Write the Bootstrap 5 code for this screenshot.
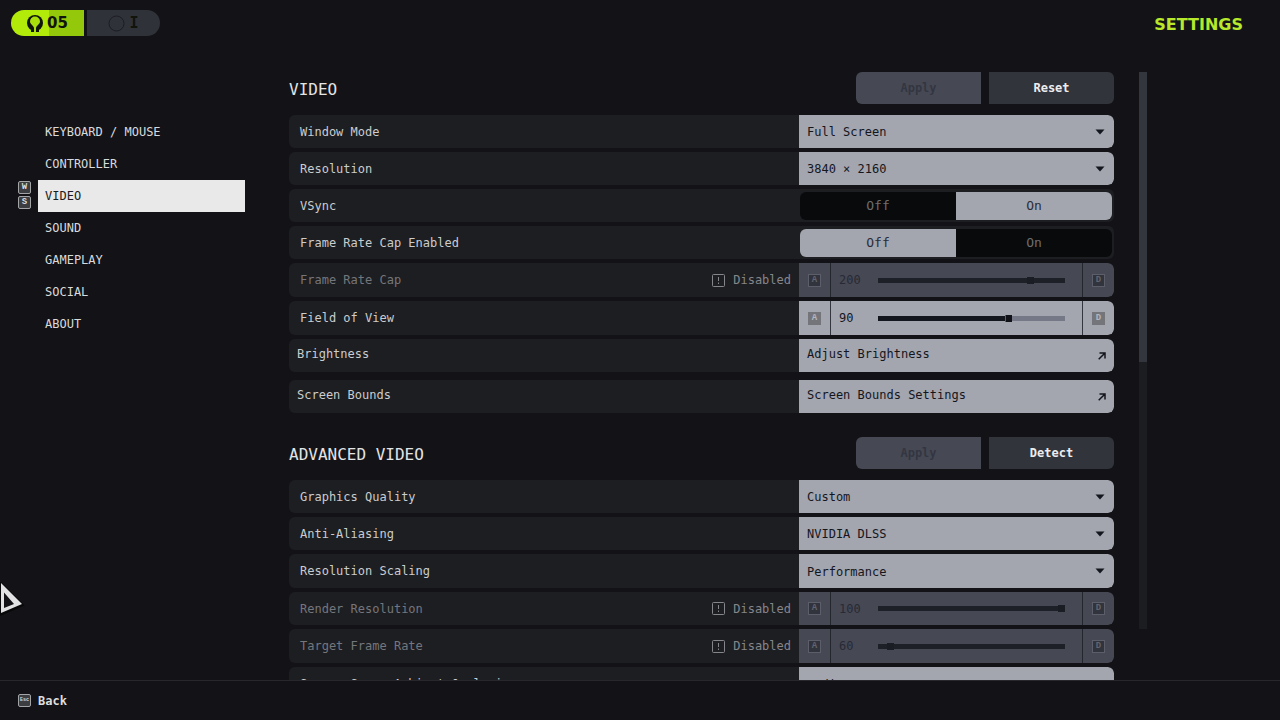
<!DOCTYPE html>
<html lang="en">
<head>
<meta charset="utf-8">
<meta name="viewport" content="width=device-width, initial-scale=1">
<title>Settings</title>
<link href="https://cdn.jsdelivr.net/npm/bootstrap@5.3.0/dist/css/bootstrap.min.css" rel="stylesheet">
<style>
  :root {
    --page: #131317; --panel: #1d1e22; --light: #a3a5af; --ink: #14161d;
    --off-bg: #464854; --off-ink: #282a34; --lime: #b0e90b;
  }
  body { background: var(--page); color: #d9dadc; font-family: "DejaVu Sans Mono", monospace; font-size: 12px; line-height: 16px; }
  button, select, input { font-family: inherit; }
  .wide { font-family: "DejaVu Sans", sans-serif; font-weight: 700; font-size: 16px; line-height: 20px; }

  /* header */
  .topbar { height: 50px; padding: 0 37px 0 11px; }
  .pill { width: 73px; height: 26px; color: #10140a; font-size: 15px; }
  .pill-lime { background: linear-gradient(90deg, #b2eb0a 52%, #94c80b 52%); border-radius: 13px 0 0 13px; }
  .pill-dim { background: #30323a; border-radius: 0 13px 13px 0; }
  .slab { font-family: "DejaVu Sans Mono", monospace; font-weight: 700; }
  .page-name { color: #b7e82b; }

  /* side menu */
  .side { width: 289px; padding: 66px 44px 0 38px; }
  .side .nav-link { padding: 8px 7px; color: #d9dadc; }
  .side .nav-link:hover { color: #fff; }
  .side .nav-link.active { background: #e9e9e9; color: #1b1c20; }
  .move-keys { left: -20px; top: 1px; }
  .keycap { width: 13px; height: 13px; border: 1px solid #a3a4a6; border-radius: 2px; background: #3c3d40; color: #d9dadc; font-size: 9px; line-height: 11px; font-weight: 700; text-align: center; display: block; padding: 0; }
  .keycap-esc { font-size: 5px; }

  /* settings list */
  .settings { padding-top: 22px; }
  .section-name { font-size: 16px; line-height: 20px; font-weight: 400; color: #e4e4e6; }
  .section-head { height: 32px; margin-bottom: 11px; }
  .btn-flat { width: 125px; height: 32px; padding: 0; border: 0; font-size: 12px; font-weight: 700; color: #ececee; background: #32343c; border-radius: 0 6px 6px 0; }
  .btn-flat:hover { background: #3d404a; color: #fff; }
  .btn-flat:disabled { background: #464954; color: #333641; border-radius: 6px 0 0 6px; opacity: 1; font-weight: 700; }
  .rows { gap: 4px; }
  .opt { height: 33px; background: var(--panel); border-radius: 6px; overflow: hidden; }
  .opt-slide { height: 34px; }
  .opt-label { padding: 0 8px 0 11px; color: #cbccce; }
  .opt-go .opt-label { padding: 0 8px 3px 8px; }
  .opt-off .opt-label { color: #75767b; }
  .flagged { color: #85868b; }
  .ctl { width: 315px; }
  .form-select.pick {
    --bs-form-select-bg-img: url("data:image/svg+xml,%3Csvg xmlns='http://www.w3.org/2000/svg' viewBox='0 0 10 6'%3E%3Cpath fill='%2314161d' d='M.5.5h9L5 5.500z'/%3E%3C/svg%3E");
    height: 100%; padding: 1px 30px 0 8px; border: 0; border-radius: 0 6px 6px 0; background-color: var(--light);
    color: var(--ink); font-size: 12px; line-height: 16px; background-size: 10px 6px; background-position: right 9px center;
  }
  .go { height: 100%; padding: 0 8px 3px 8px; border: 0; border-radius: 0 6px 6px 0; background: var(--light); color: var(--ink); font-size: 12px; }
  .go svg { margin-top: 3px; }
  .flip { padding: 3px 2px 2px 1px; }
  .flip label { width: 50%; font-size: 13px; line-height: 18px; color: #6d6e72; background: #090a0c; padding: 5px 0; border: 0; text-align: center; cursor: pointer; }
  .flip .btn-check:checked + label { background: var(--light); color: #2b2d35; }
  .flip label:first-of-type { border-radius: 6px 0 0 6px; }
  .flip label:last-of-type { border-radius: 0 6px 6px 0; }
  .slide { background: var(--light); color: var(--ink); border-radius: 0 6px 6px 0; overflow: hidden; --line: #34363f; --bar: #14161d; --rest: #757887; }
  .step { width: 32px; border: 0; background: none; padding: 0; display: flex; align-items: center; justify-content: center; }
  .step-less { border-right: 1px solid var(--line); }
  .step-more { border-left: 1px solid var(--line); }
  .step .keycap { background: #74757b; border-color: #74757b; border-radius: 0; color: #b4b6be; }
  .slide output { width: 39px; padding-left: 8px; box-sizing: content-box; }
  .slide input { -webkit-appearance: none; appearance: none; height: 7px; min-width: 0; margin-right: 17px; background: linear-gradient(90deg, var(--bar) var(--fill), var(--rest) var(--fill)) center / 100% 5px no-repeat; }
  .slide input::-webkit-slider-thumb { -webkit-appearance: none; width: 7px; height: 7px; background: #101218; border-left: 1px solid #5b5e69; }
  .opt-off .slide { background: var(--off-bg); color: var(--off-ink); --line: #24262e; --bar: #1e2028; --rest: #1e2028; }
  .opt-off .slide input::-webkit-slider-thumb { background: #1b1d24; border: 0; }
  .opt-off .step .keycap { background: #31333d; border-color: #5c5e69; color: #62646f; }

  /* scroll rail and footer */
  .rail { width: 8px; margin: 22px 133px 51px 25px; background: #1c1d21; }
  .rail-thumb { height: 52%; background: #34363d; }
  .foot { height: 40px; border-top: 1px solid #27282c; padding: 0 18px; background: var(--page); }
  .foot button { color: #dcdddf; font-size: 12px; font-weight: 700; gap: 7px; }
  .pointer { left: 0; top: 582px; }
</style>
</head>
<body class="vh-100 d-flex flex-column overflow-hidden position-relative">

<header class="topbar d-flex justify-content-between align-items-center flex-shrink-0">
  <div class="d-flex wide pb-1" style="gap:3px">
    <div class="pill pill-lime d-flex align-items-center justify-content-center gap-1">
      <svg width="16" height="17" viewBox="0 0 16 17" aria-hidden="true"><circle cx="8" cy="8" r="8" fill="#10140a"/><path fill="#10140a" d="M4 13h8v4H4z"/><path fill="#a9e00b" d="M8 1.500A5 5 0 0 1 13 6.500C13 9.500 9.500 10 9 13V17H7V13C6.500 10 3 9.500 3 6.500A5 5 0 0 1 8 1.500z"/></svg>
      <span>05</span>
    </div>
    <div class="pill pill-dim d-flex align-items-center justify-content-center">
      <svg width="17" height="17" viewBox="0 0 17 17" fill="none" stroke="#1c1d23" aria-hidden="true"><circle cx="8.500" cy="8.500" r="7.500"/></svg>
      <span class="slab ms-1">I</span>
    </div>
  </div>
  <h1 class="page-name wide m-0">SETTINGS</h1>
</header>

<main class="d-flex flex-grow-1 overflow-hidden">
  <nav class="side flex-shrink-0 nav flex-column flex-nowrap" aria-label="Settings sections">
    <a class="nav-link" href="#keyboard">KEYBOARD / MOUSE</a>
    <a class="nav-link" href="#controller">CONTROLLER</a>
    <div class="position-relative">
      <div class="move-keys position-absolute d-flex flex-column" style="gap:2px"><kbd class="keycap">W</kbd><kbd class="keycap">S</kbd></div>
      <a class="nav-link active" href="#video" aria-current="page">VIDEO</a>
    </div>
    <a class="nav-link" href="#sound">SOUND</a>
    <a class="nav-link" href="#gameplay">GAMEPLAY</a>
    <a class="nav-link" href="#social">SOCIAL</a>
    <a class="nav-link" href="#about">ABOUT</a>
  </nav>

  <div class="settings flex-grow-1">
    <section id="video" class="mb-4">
      <div class="section-head d-flex justify-content-between align-items-center">
        <h2 class="section-name m-0 pt-1">VIDEO</h2>
        <div class="d-flex gap-2"><button class="btn btn-flat" disabled>Apply</button><button class="btn btn-flat">Reset</button></div>
      </div>
      <div class="rows d-flex flex-column">
        <div class="opt d-flex align-items-center">
          <label class="opt-label flex-grow-1" for="mode">Window Mode</label>
          <div class="ctl h-100"><select id="mode" class="form-select pick"><option>Full Screen</option><option>Windowed</option></select></div>
        </div>
        <div class="opt d-flex align-items-center">
          <label class="opt-label flex-grow-1" for="res">Resolution</label>
          <div class="ctl h-100"><select id="res" class="form-select pick"><option>3840 × 2160</option><option>1920 × 1080</option></select></div>
        </div>
        <div class="opt d-flex align-items-center">
          <span class="opt-label flex-grow-1" id="vs">VSync</span>
          <div class="ctl flip d-flex" role="group" aria-labelledby="vs">
            <input class="btn-check" type="radio" name="vsync" id="vs0"><label for="vs0">Off</label>
            <input class="btn-check" type="radio" name="vsync" id="vs1" checked><label for="vs1">On</label>
          </div>
        </div>
        <div class="opt d-flex align-items-center">
          <span class="opt-label flex-grow-1" id="fc">Frame Rate Cap Enabled</span>
          <div class="ctl flip d-flex" role="group" aria-labelledby="fc">
            <input class="btn-check" type="radio" name="cap" id="fc0" checked><label for="fc0">Off</label>
            <input class="btn-check" type="radio" name="cap" id="fc1"><label for="fc1">On</label>
          </div>
        </div>
        <div class="opt opt-slide opt-off d-flex align-items-center">
          <label class="opt-label flex-grow-1" for="cap">Frame Rate Cap</label>
          <div class="flagged d-flex align-items-center gap-2 pe-2"><svg width="13" height="13" viewBox="0 0 13 13" fill="none" stroke="currentColor" aria-hidden="true"><rect x=".5" y=".5" width="12" height="12" rx="1"/><path d="M6.500 3v4M6.500 8.500v1.500"/></svg>Disabled</div>
          <div class="ctl slide h-100 d-flex"><button class="step step-less" disabled aria-label="Less"><kbd class="keycap">A</kbd></button>
            <div class="d-flex align-items-center flex-grow-1"><output for="cap">200</output><input class="flex-grow-1" id="cap" type="range" min="0" max="242" value="200" disabled style="--fill:83%"></div>
            <button class="step step-more" disabled aria-label="More"><kbd class="keycap">D</kbd></button></div>
        </div>
        <div class="opt opt-slide d-flex align-items-center">
          <label class="opt-label flex-grow-1" for="fov">Field of View</label>
          <div class="ctl slide h-100 d-flex"><button class="step step-less" aria-label="Less"><kbd class="keycap">A</kbd></button>
            <div class="d-flex align-items-center flex-grow-1"><output for="fov">90</output><input class="flex-grow-1" id="fov" type="range" min="0" max="128" value="90" style="--fill:70%"></div>
            <button class="step step-more" aria-label="More"><kbd class="keycap">D</kbd></button></div>
        </div>
        <div class="opt opt-go d-flex align-items-center mb-1">
          <span class="opt-label flex-grow-1">Brightness</span>
          <div class="ctl h-100"><button class="go w-100 d-flex align-items-center justify-content-between">Adjust Brightness<svg width="8" height="8" viewBox="0 0 8 8" fill="none" stroke="currentColor" stroke-width="1.500" aria-hidden="true"><path d="M.7 7.300 7 1M1.500 1H7v5.500"/></svg></button></div>
        </div>
        <div class="opt opt-go d-flex align-items-center">
          <span class="opt-label flex-grow-1">Screen Bounds</span>
          <div class="ctl h-100"><button class="go w-100 d-flex align-items-center justify-content-between">Screen Bounds Settings<svg width="8" height="8" viewBox="0 0 8 8" fill="none" stroke="currentColor" stroke-width="1.500" aria-hidden="true"><path d="M.7 7.300 7 1M1.500 1H7v5.500"/></svg></button></div>
        </div>
      </div>
    </section>

    <section id="advanced">
      <div class="section-head d-flex justify-content-between align-items-center">
        <h2 class="section-name m-0 pt-1">ADVANCED VIDEO</h2>
        <div class="d-flex gap-2"><button class="btn btn-flat" disabled>Apply</button><button class="btn btn-flat">Detect</button></div>
      </div>
      <div class="rows d-flex flex-column">
        <div class="opt d-flex align-items-center">
          <label class="opt-label flex-grow-1" for="gq">Graphics Quality</label>
          <div class="ctl h-100"><select id="gq" class="form-select pick"><option>Custom</option></select></div>
        </div>
        <div class="opt d-flex align-items-center">
          <label class="opt-label flex-grow-1" for="aa">Anti-Aliasing</label>
          <div class="ctl h-100"><select id="aa" class="form-select pick"><option>NVIDIA DLSS</option></select></div>
        </div>
        <div class="opt opt-slide d-flex align-items-center">
          <label class="opt-label flex-grow-1" for="rs">Resolution Scaling</label>
          <div class="ctl h-100"><select id="rs" class="form-select pick"><option>Performance</option></select></div>
        </div>
        <div class="opt d-flex align-items-center opt-off">
          <label class="opt-label flex-grow-1" for="rr">Render Resolution</label>
          <div class="flagged d-flex align-items-center gap-2 pe-2"><svg width="13" height="13" viewBox="0 0 13 13" fill="none" stroke="currentColor" aria-hidden="true"><rect x=".5" y=".5" width="12" height="12" rx="1"/><path d="M6.500 3v4M6.500 8.500v1.500"/></svg>Disabled</div>
          <div class="ctl slide h-100 d-flex"><button class="step step-less" disabled aria-label="Less"><kbd class="keycap">A</kbd></button>
            <div class="d-flex align-items-center flex-grow-1"><output for="rr">100</output><input class="flex-grow-1" id="rr" type="range" min="0" max="100" value="100" disabled style="--fill:100%"></div>
            <button class="step step-more" disabled aria-label="More"><kbd class="keycap">D</kbd></button></div>
        </div>
        <div class="opt opt-slide opt-off d-flex align-items-center">
          <label class="opt-label flex-grow-1" for="tf">Target Frame Rate</label>
          <div class="flagged d-flex align-items-center gap-2 pe-2"><svg width="13" height="13" viewBox="0 0 13 13" fill="none" stroke="currentColor" aria-hidden="true"><rect x=".5" y=".5" width="12" height="12" rx="1"/><path d="M6.500 3v4M6.500 8.500v1.500"/></svg>Disabled</div>
          <div class="ctl slide h-100 d-flex"><button class="step step-less" disabled aria-label="Less"><kbd class="keycap">A</kbd></button>
            <div class="d-flex align-items-center flex-grow-1"><output for="tf">60</output><input class="flex-grow-1" id="tf" type="range" min="50" max="240" value="60" disabled style="--fill:5%"></div>
            <button class="step step-more" disabled aria-label="More"><kbd class="keycap">D</kbd></button></div>
        </div>
        <div class="opt opt-slide d-flex align-items-center">
          <label class="opt-label flex-grow-1" for="ao">Screen Space Ambient Occlusion</label>
          <div class="ctl h-100"><select id="ao" class="form-select pick"><option>Medium</option></select></div>
        </div>
      </div>
    </section>
  </div>

  <div class="rail flex-shrink-0"><div class="rail-thumb"></div></div>
</main>

<footer class="foot d-flex align-items-center flex-shrink-0">
  <button class="btn p-0 border-0 d-flex align-items-center"><kbd class="keycap keycap-esc">Esc</kbd>Back</button>
</footer>

<svg class="pointer position-absolute" width="26" height="36" viewBox="0 0 26 36" aria-hidden="true"><path d="M1 1 22 22 1 31z" fill="none" stroke="#08080a" stroke-width="3" transform="translate(0 1)"/><path fill-rule="evenodd" d="M1 1 22 22 1 31zM4 10.500V26l10-4z" fill="#e2e2e4"/></svg>

<script src="https://cdn.jsdelivr.net/npm/bootstrap@5.3.0/dist/js/bootstrap.bundle.min.js"></script>
</body>
</html>
